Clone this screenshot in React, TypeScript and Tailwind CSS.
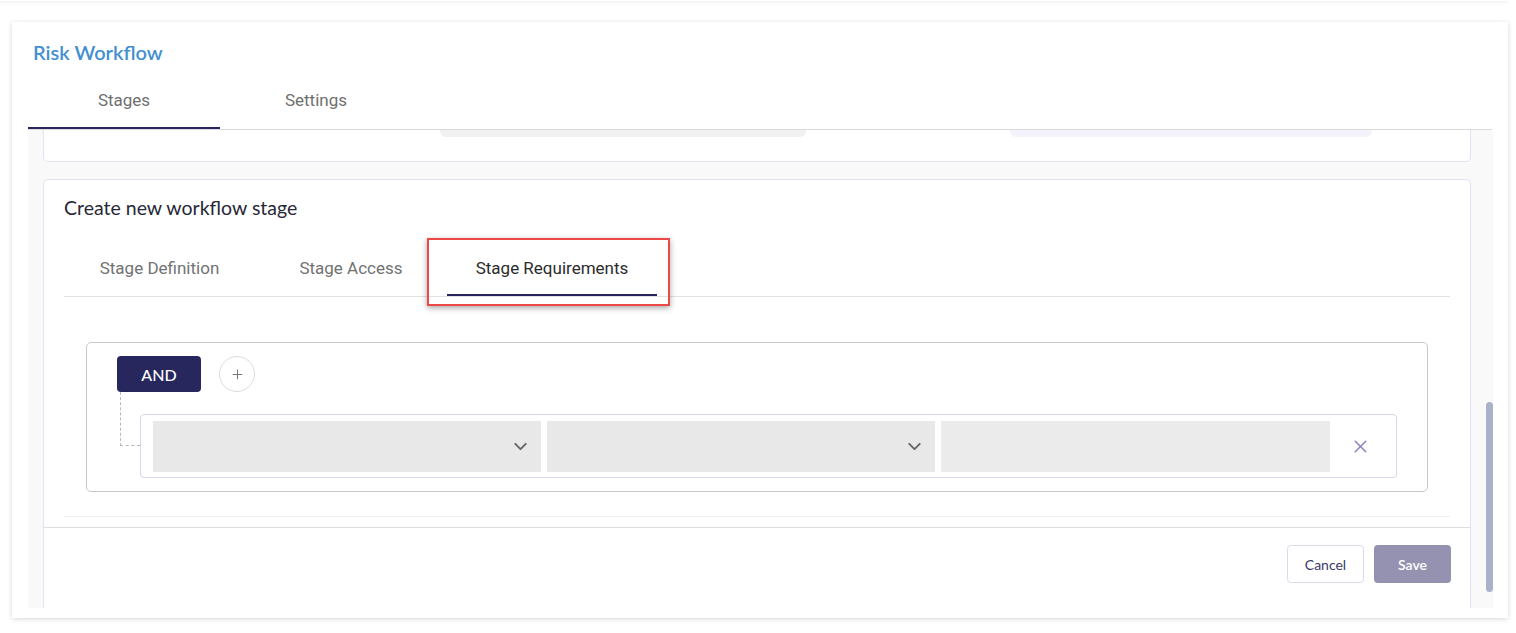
import { ChevronDown, Plus, X } from "lucide-react";

const lato = "font-['Lato','Liberation_Sans',sans-serif]";
const roboto = "font-['Roboto','Liberation_Sans',sans-serif]";

function TopTabs() {
  return (
    <div className={`mx-[16px] mt-[4px] flex h-[59px] border-b border-[#dadada] ${roboto}`}>
      <div className="flex w-[192px] items-center justify-center border-b-2 border-[#272660] pt-[4px] text-[17px] text-[#6f6f6f]">
        Stages
      </div>
      <div className="flex w-[192px] items-center justify-center pt-[2px] text-[17px] text-[#6f6f6f]">Settings</div>
    </div>
  );
}

function StageTabs() {
  return (
    <div className={`relative mx-[20px] mt-[19px] flex h-[57px] border-b border-[#e2e2e2] ${roboto}`}>
      <div className="flex w-[191px] items-center justify-center pt-[1px] text-[17px] text-[#727272]">Stage Definition</div>
      <div className="flex w-[192px] items-center justify-center pt-[1px] text-[17px] text-[#727272]">Stage Access</div>
      <div className="flex w-[210px] items-center justify-center border-b-2 border-[#27275e] pt-[3px] text-[17px] text-[#2b2b2b]">
        Stage Requirements
      </div>
      {/* annotation highlight */}
      <div className="pointer-events-none absolute left-[363px] top-[-2px] h-[68px] w-[243px] border-[2.5px] border-[#ec4848] shadow-[0_2px_6px_rgba(0,0,0,0.35)]" />
    </div>
  );
}

function SelectBox() {
  return (
    <div className="flex h-[51px] w-[388px] items-center justify-end bg-[#e8e8e8] pr-[10px]">
      <ChevronDown className="h-[21px] w-[21px] text-[#666]" strokeWidth={2.2} />
    </div>
  );
}

function RuleGroup() {
  return (
    <div className="h-[150px] rounded-[5px] border border-[#c9c9c9] pl-[30px] pt-[13px]">
      <div className="flex items-center">
        <button className={`flex h-[36px] w-[84px] items-center justify-center rounded-[4px] bg-[#27275e] pt-[2px] text-[16px] font-medium text-white ${lato}`}>
          AND
        </button>
        <div className="ml-[18px] flex h-[36px] w-[36px] items-center justify-center rounded-full border border-[#dcdcdc] text-[#7a7a7a]">
          <Plus className="h-[15px] w-[15px]" strokeWidth={1.6} />
        </div>
      </div>
      <div className="flex items-start">
        <div className="ml-[3px] h-[54px] w-[20px] border-b border-l border-dashed border-[#b8b8b8]" />
        <div className="mt-[22px] flex h-[64px] w-[1257px] items-center rounded-[4px] border border-[#d8d5ef] pl-[12px]">
          <SelectBox />
          <div className="ml-[6px]">
            <SelectBox />
          </div>
          <div className="ml-[6px] h-[51px] w-[389px] bg-[#ebebeb]" />
          <X className="ml-[20px] h-[21px] w-[21px] text-[#8b86bd]" strokeWidth={1.8} />
        </div>
      </div>
    </div>
  );
}

export default function App() {
  return (
    <div className="relative h-[633px] w-[1516px] overflow-hidden bg-white">
      <div className="h-[1px] w-[1508px] bg-white shadow-[0_1px_3px_rgba(0,0,0,0.14)]" />

      <div className="ml-[12px] mt-[21px] h-[596px] w-[1496px] bg-white pb-[10px] shadow-[0_1px_5px_rgba(0,0,0,0.16)]">
        <h1 className={`pl-[21px] pt-[16px] pb-[1px] text-[20px] font-semibold leading-[28px] text-[#428fd1] ${lato}`}>
          Risk Workflow
        </h1>
        <TopTabs />

        <div className="mx-[16px] flex h-[478px] w-[1465px] overflow-hidden bg-[#f9f9fa]">
          <div className="ml-[15px] w-[1428px]">
            {/* previous card, mostly scrolled away */}
            <div className="h-[32px] rounded-b-[5px] border-x border-b border-[#e3e1f3] bg-white">
              <div className="flex">
                <div className="ml-[396px] h-[7px] w-[366px] rounded-b-[6px] bg-[#f1f1f1]" />
                <div className="ml-[204px] h-[7px] w-[362px] rounded-b-[6px] bg-[#f4f3fc]" />
              </div>
            </div>

            <div className="mt-[17px] h-[460px] rounded-[5px] border border-[#e3e1f3] bg-white">
              <h2 className={`pl-[20px] pt-[16px] pb-[1px] text-[19.5px] leading-[24px] text-[#282838] ${lato}`}>
                Create new workflow stage
              </h2>
              <StageTabs />

              <div className="mx-[20px] border-b border-[#efefef] px-[22px] pb-[24px] pt-[45px]">
                <RuleGroup />
              </div>

              <div className="mt-[10px] flex justify-end gap-[10px] border-t border-[#dedede] pr-[19px] pt-[17px]">
                <button className={`h-[38px] w-[77px] rounded-[4px] border border-[#dcdaea] bg-white text-[14px] text-[#38386a] ${lato}`}>
                  Cancel
                </button>
                <button className={`h-[38px] w-[77px] rounded-[4px] bg-[#9492b0] text-[14px] font-semibold text-white ${lato}`}>
                  Save
                </button>
              </div>
            </div>
          </div>

          <div className="ml-auto w-[7px] pt-[272px]">
            <div className="h-[190px] w-[7px] rounded-full bg-[#aab2ca]" />
          </div>
        </div>
      </div>
    </div>
  );
}
